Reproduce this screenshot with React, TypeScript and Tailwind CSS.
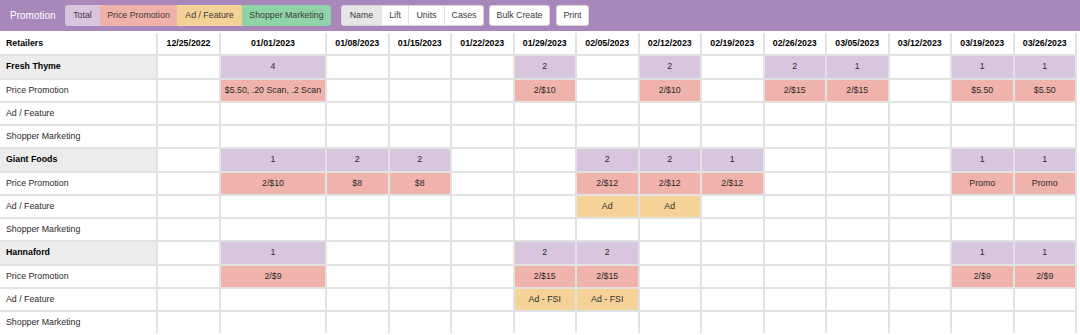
import React from 'react';

const dates = [
  '12/25/2022', '01/01/2023', '01/08/2023', '01/15/2023', '01/22/2023', '01/29/2023', '02/05/2023',
  '02/12/2023', '02/19/2023', '02/26/2023', '03/05/2023', '03/12/2023', '03/19/2023', '03/26/2023',
];

type Cells = Record<number, string>;

type Retailer = {
  name: string;
  total: Cells;
  price: Cells;
  ad: Cells;
  shopper: Cells;
};

const retailers: Retailer[] = [
  {
    name: 'Fresh Thyme',
    total: { 1: '4', 5: '2', 7: '2', 9: '2', 10: '1', 12: '1', 13: '1' },
    price: { 1: '$5.50, .20 Scan, .2 Scan', 5: '2/$10', 7: '2/$10', 9: '2/$15', 10: '2/$15', 12: '$5.50', 13: '$5.50' },
    ad: {},
    shopper: {},
  },
  {
    name: 'Giant Foods',
    total: { 1: '1', 2: '2', 3: '2', 6: '2', 7: '2', 8: '1', 12: '1', 13: '1' },
    price: { 1: '2/$10', 2: '$8', 3: '$8', 6: '2/$12', 7: '2/$12', 8: '2/$12', 12: 'Promo', 13: 'Promo' },
    ad: { 6: 'Ad', 7: 'Ad' },
    shopper: {},
  },
  {
    name: 'Hannaford',
    total: { 1: '1', 5: '2', 6: '2', 12: '1', 13: '1' },
    price: { 1: '2/$9', 5: '2/$15', 6: '2/$15', 12: '2/$9', 13: '2/$9' },
    ad: { 5: 'Ad - FSI', 6: 'Ad - FSI' },
    shopper: {},
  },
];

function Row({ label, cells, color, bold }: { label: string; cells: Cells; color: string; bold?: boolean }) {
  return (
    <>
      <div
        className={
          bold
            ? 'flex items-center pl-[6px] bg-[#ececec] font-bold text-black'
            : 'flex items-center pl-[6px] bg-white text-[#2a2a2a]'
        }
      >
        {label}
      </div>
      {dates.map((d, i) => (
        <div
          key={d}
          className={`flex items-center justify-center text-[#2a2a2a] whitespace-nowrap ${cells[i] ? color : 'bg-white'}`}
        >
          {cells[i] ?? ''}
        </div>
      ))}
    </>
  );
}

export default function App() {
  return (
    <div className="w-[1080px] h-[335px] overflow-hidden bg-white font-[family-name:'Liberation_Sans',Arial,sans-serif] text-[8.8px]">
      {/* toolbar */}
      <div className="h-[31px] bg-[#a887bb] flex items-center pl-[10px]">
        <span className="w-[45px] whitespace-nowrap text-white text-[10px] -mt-[1px]">Promotion</span>
        <div className="ml-[10px] flex h-[21px] rounded-[3px] overflow-hidden text-[#3a3a3a]">
          <div className="w-[35px] flex items-center justify-center bg-[#d8c5df]">Total</div>
          <div className="w-[77px] flex items-center justify-center bg-[#efb2a9]">Price Promotion</div>
          <div className="w-[65px] flex items-center justify-center bg-[#f4d196]">Ad / Feature</div>
          <div className="w-[89px] flex items-center justify-center bg-[#8fd4a9]">Shopper Marketing</div>
        </div>
        <div className="flex h-[21px] ml-[10px] rounded-[3px] overflow-hidden border border-[#d8d8d8] bg-white text-[#3a3a3a]">
          <div className="w-[39px] flex items-center justify-center bg-[#e6e6e6]">Name</div>
          <div className="w-[27px] flex items-center justify-center border-l border-[#e2e2e2]">Lift</div>
          <div className="w-[36px] flex items-center justify-center border-l border-[#e2e2e2]">Units</div>
          <div className="w-[39px] flex items-center justify-center border-l border-[#e2e2e2]">Cases</div>
        </div>
        <div className="flex items-center justify-center w-[61px] h-[21px] ml-[5px] rounded-[3px] bg-white border border-[#d8d8d8] text-[#3a3a3a]">
          Bulk Create
        </div>
        <div className="flex items-center justify-center w-[33px] h-[21px] ml-[6px] rounded-[3px] bg-white border border-[#d8d8d8] text-[#3a3a3a]">
          Print
        </div>
      </div>

      {/* grid */}
      <div className="mt-[2px] w-fit grid grid-cols-[156px_61px_104px_repeat(11,60.5px)_60.5px] auto-rows-[21.25px] gap-[2px] pr-[2px] bg-[#e2e2e2]">
        <div className="flex items-center pl-[6px] bg-white font-bold text-black">Retailers</div>
        {dates.map((d) => (
          <div key={d} className="flex items-center justify-center bg-white font-bold text-black">
            {d}
          </div>
        ))}
        {retailers.map((r) => (
          <React.Fragment key={r.name}>
            <Row label={r.name} cells={r.total} color="bg-[#d8c6df]" bold />
            <Row label="Price Promotion" cells={r.price} color="bg-[#efb3ab]" />
            <Row label="Ad / Feature" cells={r.ad} color="bg-[#f5d298]" />
            <Row label="Shopper Marketing" cells={r.shopper} color="bg-[#8fd4a9]" />
          </React.Fragment>
        ))}
      </div>
    </div>
  );
}
